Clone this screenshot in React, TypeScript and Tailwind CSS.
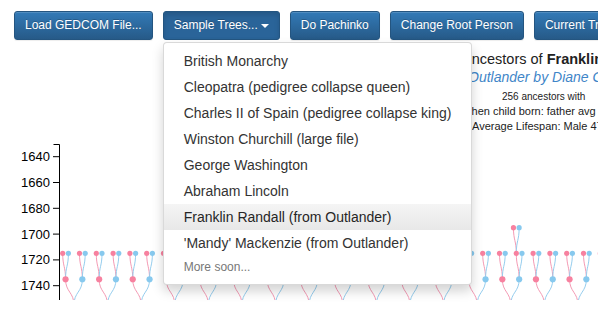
import React from "react";

type Sex = "f" | "m";
type N = { x: number; y: number; sex: Sex; r: number };
type L = { x0: number; y0: number; x1: number; y1: number; sex: Sex };

const Y = (yr: number) => 16.7 + 1.29 * (yr - 1640);

const PINK_DOT = "#f7819f";
const BLUE_DOT = "#87c9ee";
const PINK_LINE = "#f49ab4";
const BLUE_LINE = "#95cdee";

function buildTree() {
  const nodes: N[] = [];
  const links: L[] = [];
  for (let k = 0; k <= 33; k++) {
    const px = 62.7 + 16.8 * k;
    const bx = px + 5.7;
    const mx = px + 2.85;
    const ms: Sex = k % 2 === 0 ? "f" : "m";
    const yt = Y(1715);
    const ym = Y(1735);
    const yc = Y(1755);
    nodes.push({ x: px, y: yt, sex: "f", r: 2.6 });
    nodes.push({ x: bx, y: yt, sex: "m", r: 2.6 });
    nodes.push({ x: mx, y: ym, sex: ms, r: 3.1 });
    links.push({ x0: px, y0: yt, x1: mx, y1: ym, sex: "f" });
    links.push({ x0: bx, y0: yt, x1: mx, y1: ym, sex: "m" });
    const cx = k % 2 === 0 ? mx + 8.4 : mx - 8.4;
    links.push({ x0: mx, y0: ym, x1: cx, y1: yc, sex: ms });
    if (k === 27) {
      const yg = Y(1695);
      nodes.push({ x: px - 2.85, y: yg, sex: "f", r: 2.6 });
      nodes.push({ x: px + 2.85, y: yg, sex: "m", r: 2.6 });
      links.push({ x0: px - 2.85, y0: yg, x1: px, y1: yt, sex: "f" });
      links.push({ x0: px + 2.85, y0: yg, x1: px, y1: yt, sex: "m" });
    }
  }
  return { nodes, links };
}

const { nodes, links } = buildTree();

function Btn({ children, active }: { children: React.ReactNode; active?: boolean }) {
  return (
    <button
      className={
        active
          ? "shrink-0 whitespace-nowrap rounded-[3px] border border-[#245580] bg-[#2a6499] px-[10px] py-[4px] text-[12px] leading-[19px] text-white [text-shadow:0_-1px_0_rgba(0,0,0,0.2)] shadow-[inset_0_3px_5px_rgba(0,0,0,0.125)]"
          : "shrink-0 whitespace-nowrap rounded-[3px] border border-[#245580] bg-linear-to-b from-[#337ab7] to-[#265a88] px-[10px] py-[4px] text-[12px] leading-[19px] text-white [text-shadow:0_-1px_0_rgba(0,0,0,0.2)] shadow-[inset_0_1px_0_rgba(255,255,255,0.15),0_1px_1px_rgba(0,0,0,0.075)]"
      }
    >
      {children}
    </button>
  );
}

const items = [
  "British Monarchy",
  "Cleopatra (pedigree collapse queen)",
  "Charles II of Spain (pedigree collapse king)",
  "Winston Churchill (large file)",
  "George Washington",
  "Abraham Lincoln",
  "Franklin Randall (from Outlander)",
  "'Mandy' Mackenzie (from Outlander)",
];

export default function App() {
  return (
    <div className="relative h-[314px] w-[598px] overflow-hidden bg-white font-['Liberation_Sans',Arial,sans-serif] text-[#333]">
      <div className="flex gap-[10px] pl-[14px] pt-[11px]">
        <Btn>Load GEDCOM File...</Btn>
        <div className="relative shrink-0">
          <Btn active>
            <span className="inline-flex items-center">
              Sample Trees...
              <span className="ml-[3px] inline-block h-0 w-0 border-x-[4px] border-t-[4px] border-x-transparent border-t-white" />
            </span>
          </Btn>
          <div className="absolute left-0 top-full z-10 mt-[2px] min-w-[160px] whitespace-nowrap rounded-[4px] border border-[rgba(0,0,0,0.15)] bg-white py-[5px] shadow-[0_6px_12px_rgba(0,0,0,0.175)]">
            {items.map((t) => (
              <div
                key={t}
                className={
                  t.startsWith("Franklin")
                    ? "bg-linear-to-b from-[#f5f5f5] to-[#e8e8e8] px-[20px] py-[3px] text-[14px] leading-[20px] text-[#262626]"
                    : "px-[20px] py-[3px] text-[14px] leading-[20px] text-[#333]"
                }
              >
                {t}
              </div>
            ))}
            <div className="px-[20px] py-[3px] text-[12px] leading-[17px] text-[#777]">More soon...</div>
          </div>
        </div>
        <Btn>Do Pachinko</Btn>
        <Btn>Change Root Person</Btn>
        <Btn>Current Tree Info</Btn>
      </div>

      <div className="mt-[10px] whitespace-nowrap text-[#222]">
        <div className="ml-[462px] h-[18px] text-[14.5px] leading-[18px]">
          Ancestors of <b>Franklin Randall</b>
        </div>
        <div className="ml-[468px] h-[19px] text-[14px] italic leading-[19px] text-[#3f86c8]">
          Outlander by Diane Gabaldon
        </div>
        <div className="ml-[502px] mt-[2px] h-[15px] text-[10px] leading-[15px]">256 ancestors with</div>
        <div className="ml-[441px] h-[15px] text-[11px] leading-[15px]">
          Age when child born: father avg 31, mother avg 27
        </div>
        <div className="ml-[472px] h-[15px] text-[11px] leading-[15px]">
          Average Lifespan: Male 47, Female 52
        </div>
      </div>

      <svg className="mt-[6px] block" width={598} height={160}>
        <g fill="none" strokeWidth={1}>
          {links.map((l, i) => {
            const my = (l.y0 + l.y1) / 2;
            return (
              <path
                key={i}
                d={`M${l.x0},${l.y0}C${l.x0},${my} ${l.x1},${my} ${l.x1},${l.y1}`}
                stroke={l.sex === "f" ? PINK_LINE : BLUE_LINE}
              />
            );
          })}
        </g>
        {nodes.map((n, i) => (
          <circle key={i} cx={n.x} cy={n.y} r={n.r} fill={n.sex === "f" ? PINK_DOT : BLUE_DOT} />
        ))}
        <path d="M53.5,4.5H59.5V160" fill="none" stroke="#000" strokeWidth={1} />
        {[1640, 1660, 1680, 1700, 1720, 1740].map((yr) => {
          const y = Y(yr);
          return (
            <g key={yr}>
              <line x1={53} x2={59.5} y1={y} y2={y} stroke="#000" strokeWidth={1} />
              <text
                x={50}
                y={y}
                textAnchor="end"
                dominantBaseline="central"
                fontSize={13}
                fill="#000"
                fontFamily="'Liberation Sans', Arial, sans-serif"
              >
                {yr}
              </text>
            </g>
          );
        })}
      </svg>
    </div>
  );
}
